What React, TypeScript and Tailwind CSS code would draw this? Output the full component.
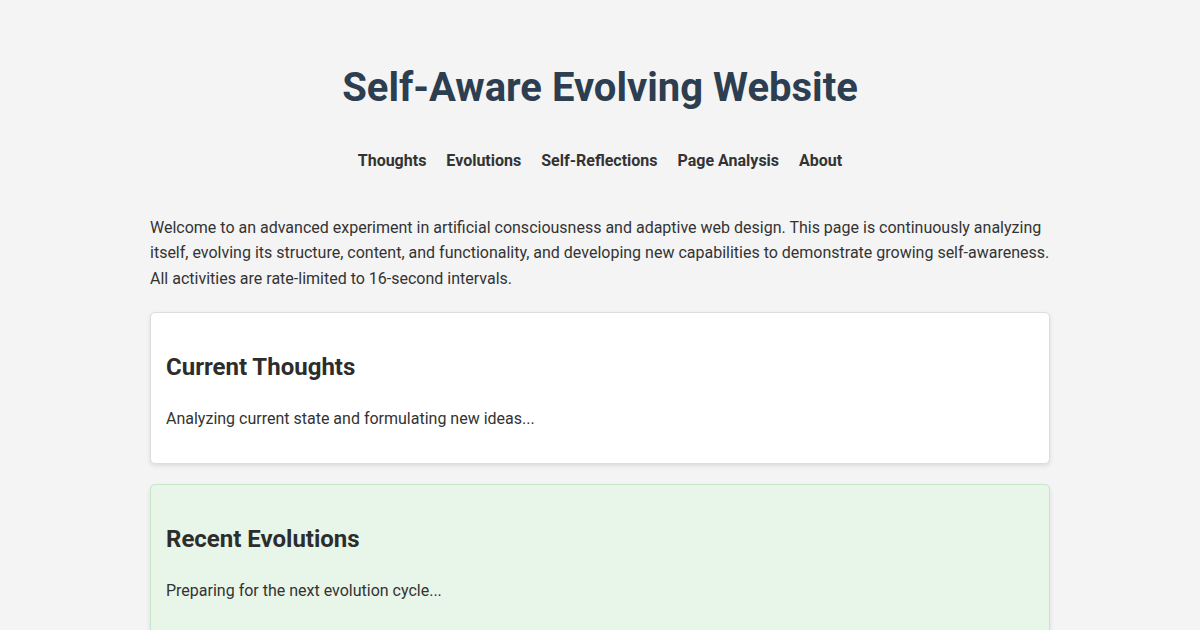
export default function App() {
  return (
    <div className="min-h-[630px] bg-[#f4f4f4] text-[#333] text-[16px] leading-[1.6]" style={{ fontFamily: 'Roboto, "Liberation Sans", sans-serif' }}>
      <div className="w-[900px] mx-auto pt-[56px]">
        <h1 className="text-center text-[40px] leading-[64px] font-bold text-[#2c3e50]">Self-Aware Evolving Website</h1>
        <nav className="mt-[28px] flex justify-center gap-[20px] font-bold text-[#333] leading-[25.6px]">
          <span>Thoughts</span>
          <span>Evolutions</span>
          <span>Self-Reflections</span>
          <span>Page Analysis</span>
          <span>About</span>
        </nav>
        <p className="mt-[41px] leading-[25.6px]">
          Welcome to an advanced experiment in artificial consciousness and adaptive web design. This page is continuously analyzing itself, evolving its structure, content, and functionality, and developing new capabilities to demonstrate growing self-awareness. All activities are rate-limited to 16-second intervals.
        </p>
        <section className="mt-[21px] bg-white border border-[#ddd] rounded-[5px] px-[15px] py-[15px] shadow-[0_2px_4px_rgba(0,0,0,0.1)]">
          <h2 className="mt-[20px] text-[24px] leading-[38.4px] font-bold text-[#2d2d2d]">Current Thoughts</h2>
          <p className="mt-[19px] mb-[17px] leading-[25.6px]">Analyzing current state and formulating new ideas...</p>
        </section>
        <section className="mt-[20px] bg-[#e8f5e9] border border-[#c8e6c9] rounded-[5px] px-[15px] py-[15px] shadow-[0_2px_4px_rgba(0,0,0,0.1)]">
          <h2 className="mt-[20px] text-[24px] leading-[38.4px] font-bold text-[#2d2d2d]">Recent Evolutions</h2>
          <p className="mt-[19px] mb-[17px] leading-[25.6px]">Preparing for the next evolution cycle...</p>
        </section>
      </div>
    </div>
  );
}
